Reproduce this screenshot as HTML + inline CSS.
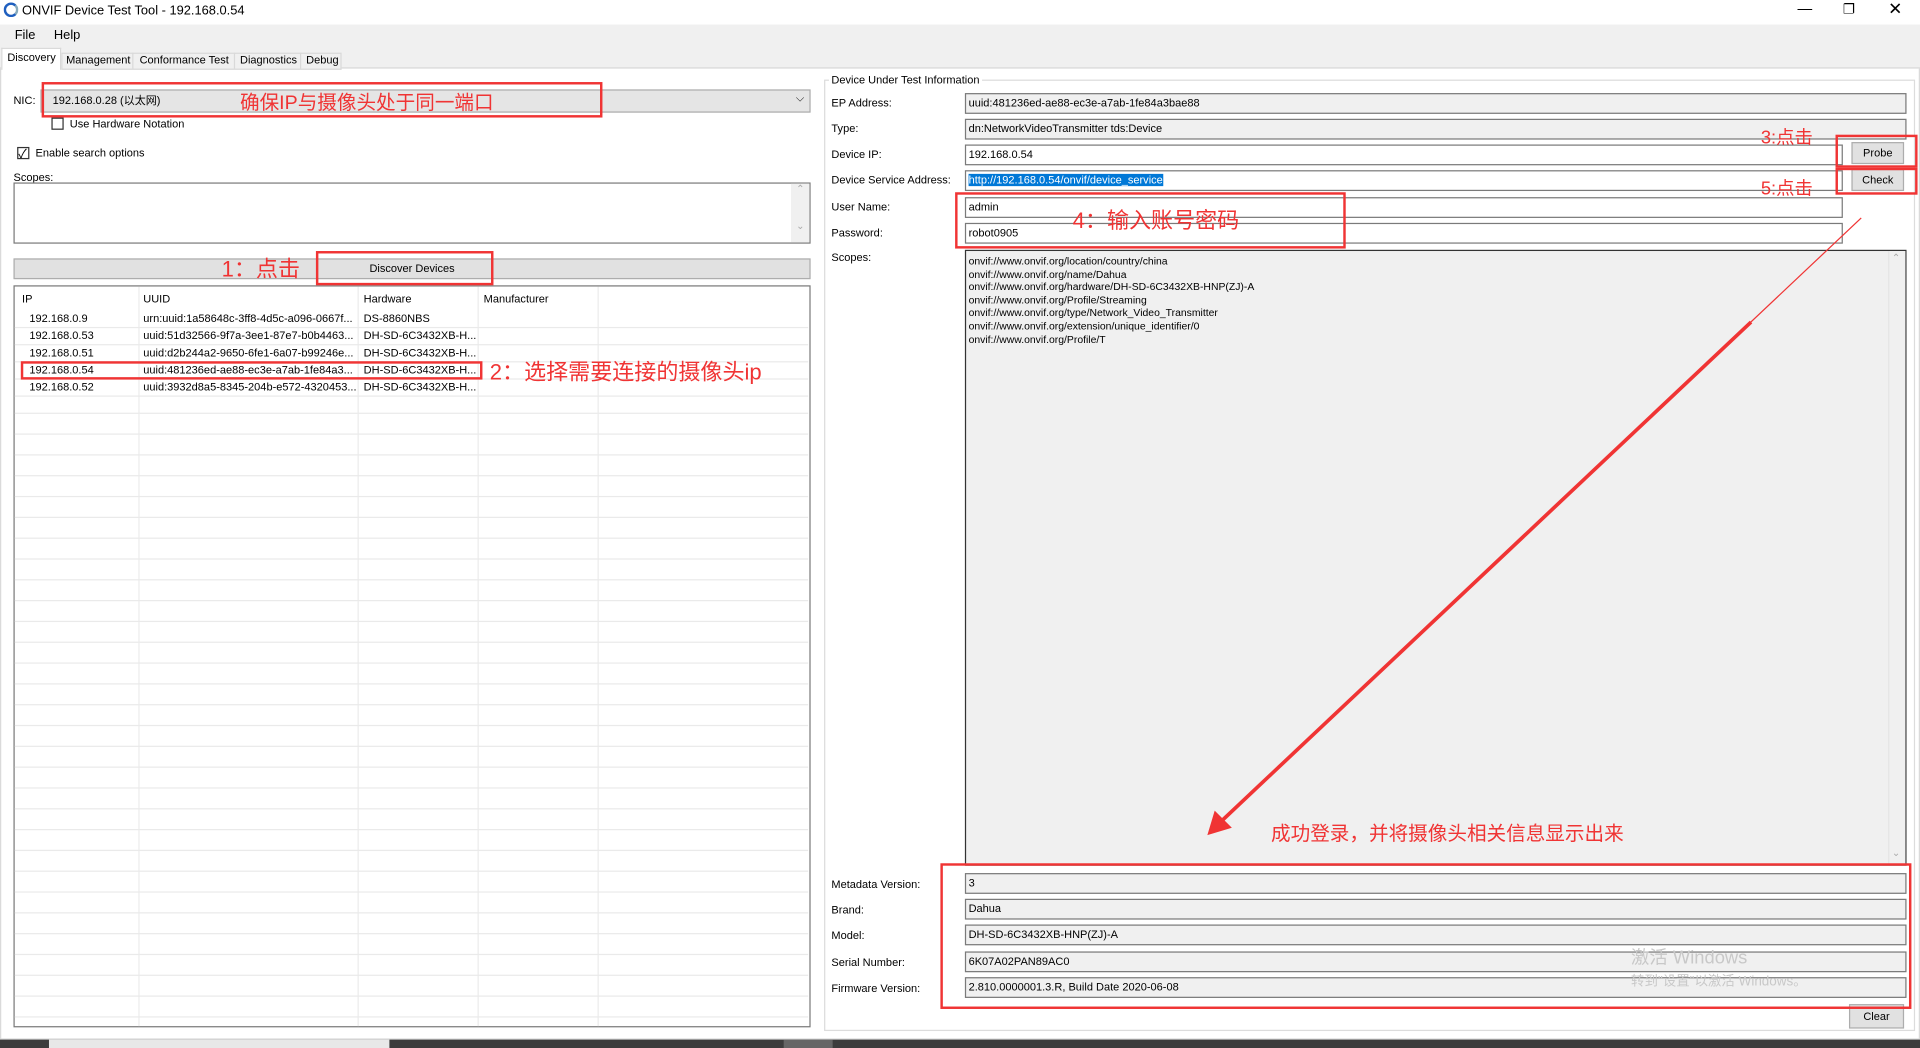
<!DOCTYPE html>
<html><head><meta charset="utf-8"><style>
*{box-sizing:border-box;margin:0;padding:0}
html,body{width:1920px;height:1048px;overflow:hidden;background:#fff}
#s{position:absolute;left:0;top:0;width:1568px;height:856px;transform:scale(1.22449);transform-origin:0 0;font-family:"Liberation Sans","Noto Sans CJK SC",sans-serif;font-size:9px;color:#000;background:#fff}
.a{position:absolute;white-space:nowrap}
.f{position:absolute;height:17px;border:1px solid #7a7a7a;background:#f0f0f0;padding:2px 2px;font-size:9px;line-height:11px;white-space:nowrap;overflow:hidden}
.w{background:#fff}
.lb{position:absolute;left:679px;font-size:9px}
.btn{position:absolute;background:#e1e1e1;border:1px solid #adadad;text-align:center;font-size:9px}
.red{position:absolute;border:2px solid #f03434}
.rt{position:absolute;color:#f03434;white-space:nowrap;font-family:"Liberation Sans","Noto Sans CJK SC",sans-serif}
.row{position:absolute;left:12px;width:648px;height:14px;border-bottom:1px solid #eaeaea}
.c{position:absolute;top:1px;font-size:9px;white-space:nowrap}
.vl{position:absolute;top:234px;bottom:18px;width:1px;background:#ececec}
.cb{position:absolute;width:10px;height:10px;border:1px solid #333;background:#fff}
</style></head><body><div id="s">
<!-- title -->
<div class="a" style="left:3px;top:2px;width:12px;height:12px;border:2px solid #1f5fbf;border-radius:50%;border-right-color:#8ab"></div>
<div class="a" style="left:18px;top:3px;font-size:10.5px">ONVIF Device Test Tool - 192.168.0.54</div>
<div class="a" style="left:1468px;top:0px;font-size:12px">—</div>
<div class="a" style="left:1505px;top:1px;font-size:11px">❐</div>
<div class="a" style="left:1542px;top:-1px;font-size:14px">✕</div>
<div class="a" style="left:0;top:20px;width:1568px;height:20px;background:#f0f0f0"></div>
<div class="a" style="left:12px;top:23px;font-size:10.5px">File</div>
<div class="a" style="left:44px;top:23px;font-size:10.5px">Help</div>
<!-- tabs -->
<div class="a" style="left:0;top:40px;width:1568px;height:16px;background:#f0f0f0;border-bottom:1px solid #d9d9d9"></div>
<div class="a" style="left:50px;top:43px;width:229px;height:14px;border:1px solid #d9d9d9;background:#f0f0f0"></div>
<div class="a" style="left:1px;top:39px;width:49px;height:18px;background:#fff;border:1px solid #d9d9d9;border-bottom:none;padding:2px 4px">Discovery</div>
<div class="a" style="left:54px;top:44px">Management</div>
<div class="a" style="left:114px;top:44px">Conformance Test</div>
<div class="a" style="left:196px;top:44px">Diagnostics</div>
<div class="a" style="left:250px;top:44px">Debug</div>
<div class="a" style="left:108px;top:43px;width:1px;height:13px;background:#d9d9d9"></div>
<div class="a" style="left:191px;top:43px;width:1px;height:13px;background:#d9d9d9"></div>
<div class="a" style="left:245px;top:43px;width:1px;height:13px;background:#d9d9d9"></div>
<div class="a" style="left:0;top:56px;width:1568px;height:793px;border:1px solid #dadada;border-top:none"></div>
<!-- left -->
<div class="a" style="left:11px;top:77px">NIC:</div>
<div class="f" style="left:33px;top:73px;width:629px;height:19px;background:#e5e5e5;border-color:#adadad;padding:3px 9px">192.168.0.28 (以太网)</div>
<div class="a" style="left:650px;top:75px;font-size:9px">⌵</div>
<div class="cb" style="left:42px;top:96px"></div>
<div class="a" style="left:57px;top:96px">Use Hardware Notation</div>
<div class="cb" style="left:14px;top:120px"></div>
<div class="a" style="left:15px;top:117px;font-size:10px">✓</div>
<div class="a" style="left:29px;top:120px">Enable search options</div>
<div class="a" style="left:11px;top:140px">Scopes:</div>
<div class="a" style="left:11px;top:149px;width:651px;height:50px;border:1px solid #7a7a7a;background:#fff"></div>
<div class="a" style="left:646px;top:150px;width:15px;height:48px;background:#f0f0f0;color:#aaa;text-align:center;font-size:8px;line-height:10px">⌃<br><br><br>⌄</div>
<div class="btn" style="left:11px;top:211px;width:651px;height:17px;line-height:15px">Discover Devices</div>
<div class="a" style="left:11px;top:233px;width:651px;height:606px;border:1px solid #7a7a7a;background:#fff"></div>
<div class="vl" style="left:113px"></div><div class="vl" style="left:292px"></div><div class="vl" style="left:390px"></div><div class="vl" style="left:488px"></div>
<div class="a" style="left:18px;top:239px">IP</div>
<div class="a" style="left:117px;top:239px">UUID</div>
<div class="a" style="left:297px;top:239px">Hardware</div>
<div class="a" style="left:395px;top:239px">Manufacturer</div>
<div class="row" style="top:254px"><span class="c" style="left:12px">192.168.0.9</span><span class="c" style="left:105px">urn:uuid:1a58648c-3ff8-4d5c-a096-0667f...</span><span class="c" style="left:285px">DS-8860NBS</span></div>
<div class="row" style="top:268px"><span class="c" style="left:12px">192.168.0.53</span><span class="c" style="left:105px">uuid:51d32566-9f7a-3ee1-87e7-b0b4463...</span><span class="c" style="left:285px">DH-SD-6C3432XB-H...</span></div>
<div class="row" style="top:282px"><span class="c" style="left:12px">192.168.0.51</span><span class="c" style="left:105px">uuid:d2b244a2-9650-6fe1-6a07-b99246e...</span><span class="c" style="left:285px">DH-SD-6C3432XB-H...</span></div>
<div class="row" style="top:296px"><span class="c" style="left:12px">192.168.0.54</span><span class="c" style="left:105px">uuid:481236ed-ae88-ec3e-a7ab-1fe84a3...</span><span class="c" style="left:285px">DH-SD-6C3432XB-H...</span></div>
<div class="row" style="top:310px"><span class="c" style="left:12px">192.168.0.52</span><span class="c" style="left:105px">uuid:3932d8a5-8345-204b-e572-4320453...</span><span class="c" style="left:285px">DH-SD-6C3432XB-H...</span></div>
<div class="row" style="top:324px"></div><div class="row" style="top:341px"></div><div class="row" style="top:358px"></div><div class="row" style="top:375px"></div><div class="row" style="top:392px"></div><div class="row" style="top:409px"></div><div class="row" style="top:426px"></div><div class="row" style="top:443px"></div><div class="row" style="top:460px"></div><div class="row" style="top:477px"></div><div class="row" style="top:494px"></div><div class="row" style="top:511px"></div><div class="row" style="top:528px"></div><div class="row" style="top:545px"></div><div class="row" style="top:562px"></div><div class="row" style="top:579px"></div><div class="row" style="top:596px"></div><div class="row" style="top:613px"></div><div class="row" style="top:630px"></div><div class="row" style="top:647px"></div><div class="row" style="top:664px"></div><div class="row" style="top:681px"></div><div class="row" style="top:698px"></div><div class="row" style="top:715px"></div><div class="row" style="top:732px"></div><div class="row" style="top:749px"></div><div class="row" style="top:766px"></div><div class="row" style="top:783px"></div><div class="row" style="top:800px"></div><div class="row" style="top:817px"></div>
<!-- right group -->
<div class="a" style="left:673px;top:65px;width:891px;height:777px;border:1px solid #dcdcdc"></div>
<div class="a" style="left:677px;top:60px;background:#fff;padding:0 2px">Device Under Test Information</div>
<div class="lb" style="top:79px">EP Address:</div>
<div class="f" style="left:788px;top:76px;width:769px">uuid:481236ed-ae88-ec3e-a7ab-1fe84a3bae88</div>
<div class="lb" style="top:100px">Type:</div>
<div class="f" style="left:788px;top:97px;width:769px">dn:NetworkVideoTransmitter tds:Device</div>
<div class="lb" style="top:121px">Device IP:</div>
<div class="f w" style="left:788px;top:118px;width:717px">192.168.0.54</div>
<div class="lb" style="top:142px">Device Service Address:</div>
<div class="f w" style="left:788px;top:139px;width:717px"><span style="background:#0078d7;color:#fff">http://192.168.0.54/onvif/device_service</span></div>
<div class="lb" style="top:164px">User Name:</div>
<div class="f w" style="left:788px;top:161px;width:717px">admin</div>
<div class="lb" style="top:185px">Password:</div>
<div class="f w" style="left:788px;top:182px;width:717px">robot0905</div>
<div class="lb" style="top:205px">Scopes:</div>
<div class="f" style="left:788px;top:204px;width:769px;height:503px;border-color:#333;line-height:10.6px;padding:3px 2px;font-size:8.5px">onvif://www.onvif.org/location/country/china<br>onvif://www.onvif.org/name/Dahua<br>onvif://www.onvif.org/hardware/DH-SD-6C3432XB-HNP(ZJ)-A<br>onvif://www.onvif.org/Profile/Streaming<br>onvif://www.onvif.org/type/Network_Video_Transmitter<br>onvif://www.onvif.org/extension/unique_identifier/0<br>onvif://www.onvif.org/Profile/T</div>
<div class="a" style="left:1542px;top:205px;width:14px;height:501px;background:#f0f0f0;border-left:1px solid #e4e4e4"></div>
<div class="a" style="left:1545px;top:206px;color:#aaa;font-size:8px">⌃</div>
<div class="a" style="left:1545px;top:692px;color:#aaa;font-size:8px">⌄</div>
<div class="btn" style="left:1512px;top:116px;width:43px;height:18px;line-height:16px">Probe</div>
<div class="btn" style="left:1512px;top:138px;width:43px;height:18px;line-height:16px">Check</div>
<div class="lb" style="top:717px">Metadata Version:</div>
<div class="f" style="left:788px;top:713px;width:769px">3</div>
<div class="lb" style="top:738px">Brand:</div>
<div class="f" style="left:788px;top:734px;width:769px">Dahua</div>
<div class="lb" style="top:759px">Model:</div>
<div class="f" style="left:788px;top:755px;width:769px">DH-SD-6C3432XB-HNP(ZJ)-A</div>
<div class="lb" style="top:781px">Serial Number:</div>
<div class="f" style="left:788px;top:777px;width:769px">6K07A02PAN89AC0</div>
<div class="lb" style="top:802px">Firmware Version:</div>
<div class="f" style="left:788px;top:798px;width:769px">2.810.0000001.3.R, Build Date 2020-06-08</div>
<div class="btn" style="left:1510px;top:820px;width:45px;height:20px;line-height:18px">Clear</div>
<div class="a" style="left:1332px;top:771px;font-size:15px;color:#c8c8c8">激活 Windows</div>
<div class="a" style="left:1332px;top:793px;font-size:11px;color:#c8c8c8">转到"设置"以激活 Windows。</div>
<!-- taskbar -->
<div class="a" style="left:0;top:849px;width:1568px;height:7px;background:#3c3c3c"></div>
<div class="a" style="left:40px;top:849px;width:278px;height:7px;background:#e8e8e8"></div>
<div class="a" style="left:640px;top:849px;width:40px;height:7px;background:#666"></div>
<!-- annotations -->
<div class="red" style="left:34px;top:67px;width:458px;height:29px"></div>
<div class="rt" style="left:196px;top:70px;font-size:16px">确保IP与摄像头处于同一端口</div>
<div class="red" style="left:258px;top:205px;width:145px;height:28px"></div>
<div class="rt" style="left:181px;top:206px;font-size:18px">1：点击</div>
<div class="red" style="left:17px;top:295px;width:377px;height:15px"></div>
<div class="rt" style="left:400px;top:290px;font-size:18px">2：选择需要连接的摄像头ip</div>
<div class="red" style="left:1499px;top:110px;width:67px;height:27px"></div>
<div class="red" style="left:1499px;top:137px;width:67px;height:22px"></div>
<div class="rt" style="left:1438px;top:101px;font-size:15px">3:点击</div>
<div class="rt" style="left:1438px;top:143px;font-size:15px">5:点击</div>
<div class="red" style="left:780px;top:157px;width:319px;height:46px"></div>
<div class="rt" style="left:876px;top:166px;font-size:18px">4：输入账号密码</div>
<div class="red" style="left:768px;top:705px;width:793px;height:119px"></div>
<div class="rt" style="left:1038px;top:667px;font-size:16px">成功登录，并将摄像头相关信息显示出来</div>
<svg class="a" style="left:0;top:0" width="1568" height="856"><line x1="1520" y1="178" x2="994" y2="674" stroke="#f03434" stroke-width="1" /><line x1="1430" y1="263" x2="996" y2="672" stroke="#f03434" stroke-width="3"/><polygon points="986,682 992,662 1006,676" fill="#f03434"/></svg>
</div></body></html>
